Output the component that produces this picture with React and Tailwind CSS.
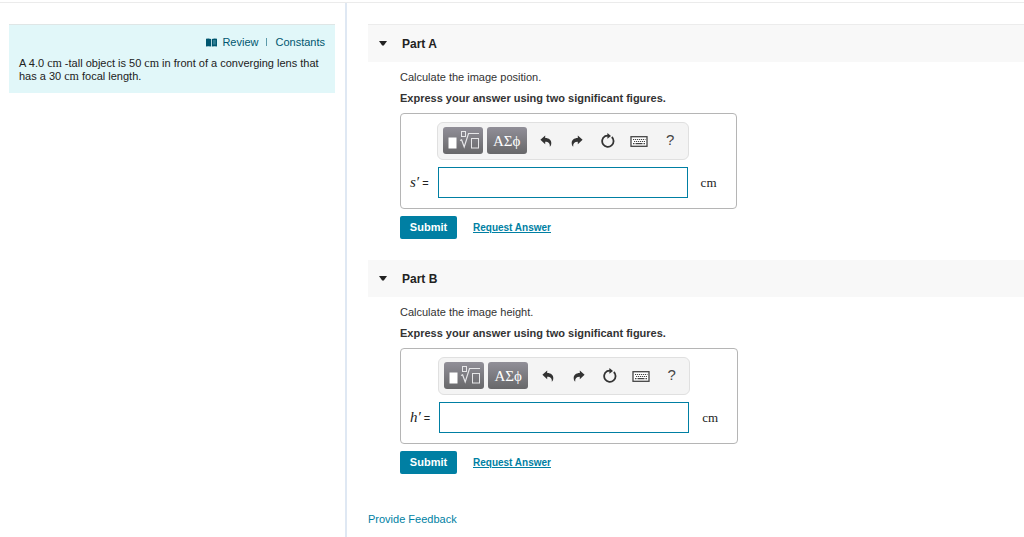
import React from "react";

function BookIcon() {
  return (
    <svg width="11" height="9" viewBox="0 0 11 9" aria-hidden="true">
      <path d="M0 0.8Q2.6 0 5.1 0.9V8.6Q2.6 7.8 0 8.4Z" fill="#00566f" />
      <path d="M11 0.8Q8.4 0 5.9 0.9V8.6Q8.4 7.8 11 8.4Z" fill="#00566f" />
      <path d="M7 2H9.8V6.6H7Z" fill="#2f7d92" />
    </svg>
  );
}

function TemplateIcon() {
  return (
    <svg width="32" height="21" viewBox="0 0 32 21" fill="none" aria-hidden="true">
      <rect x="1.5" y="7.5" width="8" height="11" fill="#fff" />
      <rect x="14.5" y="1.5" width="4" height="5" stroke="#e6e6e8" />
      <path d="M13 10.5L14.6 9.8L17.2 17L21.5 3.5H32" stroke="#e6e6e8" strokeWidth="1.2" />
      <rect x="24.5" y="8.5" width="7" height="9.5" stroke="#e6e6e8" />
    </svg>
  );
}

function UndoIcon() {
  return (
    <svg width="12" height="12" viewBox="0 0 12 12" aria-hidden="true">
      <path d="M5.2 0.4V2.9C9.2 2.9 11.3 5 11.3 8C11.3 9.6 10.8 11 9.8 11.8C10.1 8.4 8.6 6.9 5.2 6.8V9.3L0.4 4.8Z" fill="#333" />
    </svg>
  );
}

function RedoIcon() {
  return (
    <svg width="12" height="12" viewBox="0 0 12 12" aria-hidden="true">
      <path d="M6.8 0.4V2.9C2.8 2.9 0.7 5 0.7 8C0.7 9.6 1.2 11 2.2 11.8C1.9 8.4 3.4 6.9 6.8 6.8V9.3L11.6 4.8Z" fill="#333" />
    </svg>
  );
}

function ResetIcon() {
  return (
    <svg width="14" height="15" viewBox="0 0 14 15" aria-hidden="true">
      <path d="M10.8 4A5.7 5.7 0 1 1 4 3.2Q5.4 2.6 7.4 2.7" fill="none" stroke="#333" strokeWidth="1.8" />
      <path d="M6.4 0V5.8L10 2.9Z" fill="#333" />
    </svg>
  );
}

function KeyboardIcon() {
  return (
    <svg width="18" height="12" viewBox="0 0 18 12" aria-hidden="true">
      <rect x="1" y="1.7" width="16" height="9.6" fill="#fff" stroke="#444" strokeWidth="1.3" />
      <path d="M3 4.5H15.5M4 6.5H15" stroke="#444" strokeWidth="1.1" strokeDasharray="1.2 0.8" />
      <path d="M3 8.6H4.5M5.5 8.6H12.5M13.5 8.6H15" stroke="#444" strokeWidth="1.1" />
    </svg>
  );
}

function ToolButton({ label, children }) {
  return (
    <button type="button" aria-label={label} className="flex h-7 w-[31px] items-center justify-center">
      {children}
    </button>
  );
}

function Toolbar() {
  const dark =
    "flex h-[27px] w-10 items-center justify-center rounded-[3px] bg-linear-to-b from-[#918f98] to-[#68686a] text-white";
  return (
    <div role="toolbar" aria-label="Equation tools" className="flex h-[38px] items-center rounded-md border border-[#e0e0e0] bg-[#f4f4f4] pb-px pl-[5px]">
      <button type="button" aria-label="Templates" className={dark}>
        <TemplateIcon />
      </button>
      <button type="button" className={"ml-1 font-['Liberation_Serif',serif] text-[15px] leading-4 " + dark}>
        ΑΣϕ
      </button>
      <div className="ml-1 flex items-center">
        <ToolButton label="Undo"><UndoIcon /></ToolButton>
        <ToolButton label="Redo"><RedoIcon /></ToolButton>
        <ToolButton label="Reset"><ResetIcon /></ToolButton>
        <ToolButton label="Keyboard shortcuts"><KeyboardIcon /></ToolButton>
        <button type="button" className="flex h-7 w-[31px] items-center justify-center text-[15px] text-[#444]">?</button>
      </div>
    </div>
  );
}

function Part({ title, prompt, symbol, id }) {
  return (
    <section className="group">
      <header className="border-[#ececec] bg-[#f8f8f8] pl-[11px] group-first:border-t">
        <button type="button" aria-expanded="true" className="flex h-[37px] items-center gap-[15px] text-xs font-bold text-[#222]">
          <svg width="8" height="5" viewBox="0 0 8 5" aria-hidden="true">
            <path d="M0 0H8L4.8 4.5H3.2Z" fill="#222" />
          </svg>
          {title}
        </button>
      </header>
      <div className="flex flex-col items-start pl-8 pt-2">
        <p className="text-[11px] leading-[14px] text-[#333]">{prompt}</p>
        <p className="mt-[7px] text-[11px] leading-[14px] font-bold text-[#333]">
          Express your answer using two significant figures.
        </p>
        <div className="mt-2 grid grid-cols-[auto_252px_auto] items-center gap-y-[7px] rounded border border-[#b5b5b5] pt-2 pr-[19px] pb-[10px] pl-[9px]">
          <div className="col-start-2">
            <Toolbar />
          </div>
          <label htmlFor={id} className="col-start-1 pr-2 text-[11px] leading-4 text-[#222]">
            <i className="font-['Liberation_Serif',serif] text-[15px]">{symbol}′</i> =
          </label>
          <input id={id} type="text" className="mx-px h-[31px] border border-[#007fa3] bg-white px-2 text-sm outline-none" />
          <span className="pl-3 font-['Liberation_Serif',serif] text-[13px] leading-4 text-[#222]">cm</span>
        </div>
        <div className="mt-[7px] flex items-center gap-4">
          <button type="button" className="h-[23px] w-[57px] rounded-[2px] bg-[#007fa3] text-[11px] font-bold text-white">
            Submit
          </button>
          <a href="#answer" className="text-[10px] leading-4 font-bold text-[#007fa3] underline">
            Request Answer
          </a>
        </div>
      </div>
    </section>
  );
}

function Unit() {
  return <span className="font-['Liberation_Serif',serif] text-xs leading-none">cm</span>;
}

export default function App() {
  return (
    <div className="min-h-screen bg-white pt-[2px] font-['Liberation_Sans',Arial,sans-serif]">
      <div className="flex min-h-[calc(100vh-2px)] border-t border-[#ebebeb]">
        <aside className="w-[34%] max-w-[345px] shrink-0 pt-[21px] pr-[10px] pl-[9px]">
          <div className="border-t border-[#dfe6e6] bg-[#e1f7f9] p-[10px]">
            <div className="flex items-center justify-end text-[11px] leading-[14px] text-[#00566f]">
              <a href="#review" className="flex items-center gap-[5px]">
                <BookIcon />
                Review
              </a>
              <span aria-hidden="true" className="mx-2 h-2 w-px bg-[#5c9aaa]" />
              <a href="#constants">Constants</a>
            </div>
            <p className="mt-2 text-[11px] leading-[13px] text-[#222]">
              A 4.0 <Unit /> -tall object is 50 <Unit /> in front of a converging lens that has a 30 <Unit /> focal length.
            </p>
          </div>
        </aside>
        <main className="min-w-0 grow border-l-2 border-[#dfe8f3] pt-[21px] pl-[21px]">
          <div className="flex flex-col gap-[21px]">
            <Part id="part-a" title="Part A" prompt="Calculate the image position." symbol="s" />
            <Part id="part-b" title="Part B" prompt="Calculate the image height." symbol="h" />
          </div>
          <a href="#feedback" className="mt-[38px] inline-block text-[11px] leading-[14px] text-[#007fa3]">
            Provide Feedback
          </a>
        </main>
      </div>
    </div>
  );
}
